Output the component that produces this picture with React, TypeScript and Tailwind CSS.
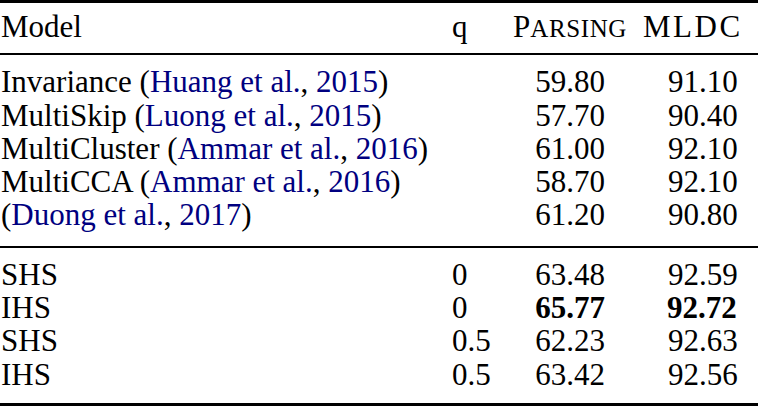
const cite = "text-[#000080]";

type Row = { model: React.ReactNode; q?: string; parsing: string; mldc: string; bold?: boolean };

const baselines: Row[] = [
  { model: <>Invariance (<span className={cite}>Huang et al.</span>, <span className={cite}>2015</span>)</>, parsing: "59.80", mldc: "91.10" },
  { model: <>MultiSkip (<span className={cite}>Luong et al.</span>, <span className={cite}>2015</span>)</>, parsing: "57.70", mldc: "90.40" },
  { model: <>MultiCluster (<span className={cite}>Ammar et al.</span>, <span className={cite}>2016</span>)</>, parsing: "61.00", mldc: "92.10" },
  { model: <>MultiCCA (<span className={cite}>Ammar et al.</span>, <span className={cite}>2016</span>)</>, parsing: "58.70", mldc: "92.10" },
  { model: <>(<span className={cite}>Duong et al.</span>, <span className={cite}>2017</span>)</>, parsing: "61.20", mldc: "90.80" },
];

const ours: Row[] = [
  { model: "SHS", q: "0", parsing: "63.48", mldc: "92.59" },
  { model: "IHS", q: "0", parsing: "65.77", mldc: "92.72", bold: true },
  { model: "SHS", q: "0.5", parsing: "62.23", mldc: "92.63" },
  { model: "IHS", q: "0.5", parsing: "63.42", mldc: "92.56" },
];

function TableRow({ row }: { row: Row }) {
  return (
    <div className="grid grid-cols-[452px_60px_116px_130px]">
      <div className="pl-[1px] whitespace-nowrap">{row.model}</div>
      <div>{row.q}</div>
      <div className={row.bold ? "text-center font-bold" : "text-center"}>{row.parsing}</div>
      <div className={row.bold ? "pl-[39px] font-bold" : "pl-[40px]"}>{row.mldc}</div>
    </div>
  );
}

export default function App() {
  return (
    <div className="w-[763px] h-[408px] bg-white text-black font-['Liberation_Serif',serif] text-[31px] leading-[33.3px]">
      <div className="w-[758px]">
        <div className="h-[3px] bg-black" />
        <div className="grid grid-cols-[452px_60px_116px_130px] pt-[7px] pb-[10px]">
          <div className="pl-[1px]">Model</div>
          <div>q</div>
          <div className="text-center whitespace-nowrap">
            P<span className="text-[25px] leading-none tracking-[0.6px]">ARSING</span>
          </div>
          <div className="pl-[15px] tracking-[2.5px]">MLDC</div>
        </div>
        <div className="h-[2px] bg-black" />
        <div className="pt-[10px] pb-[14px]">
          {baselines.map((r, i) => (
            <TableRow key={i} row={r} />
          ))}
        </div>
        <div className="h-[2px] bg-black" />
        <div className="pt-[10px] pb-[12px]">
          {ours.map((r, i) => (
            <TableRow key={i} row={r} />
          ))}
        </div>
        <div className="h-[3.5px] bg-black" />
      </div>
    </div>
  );
}
